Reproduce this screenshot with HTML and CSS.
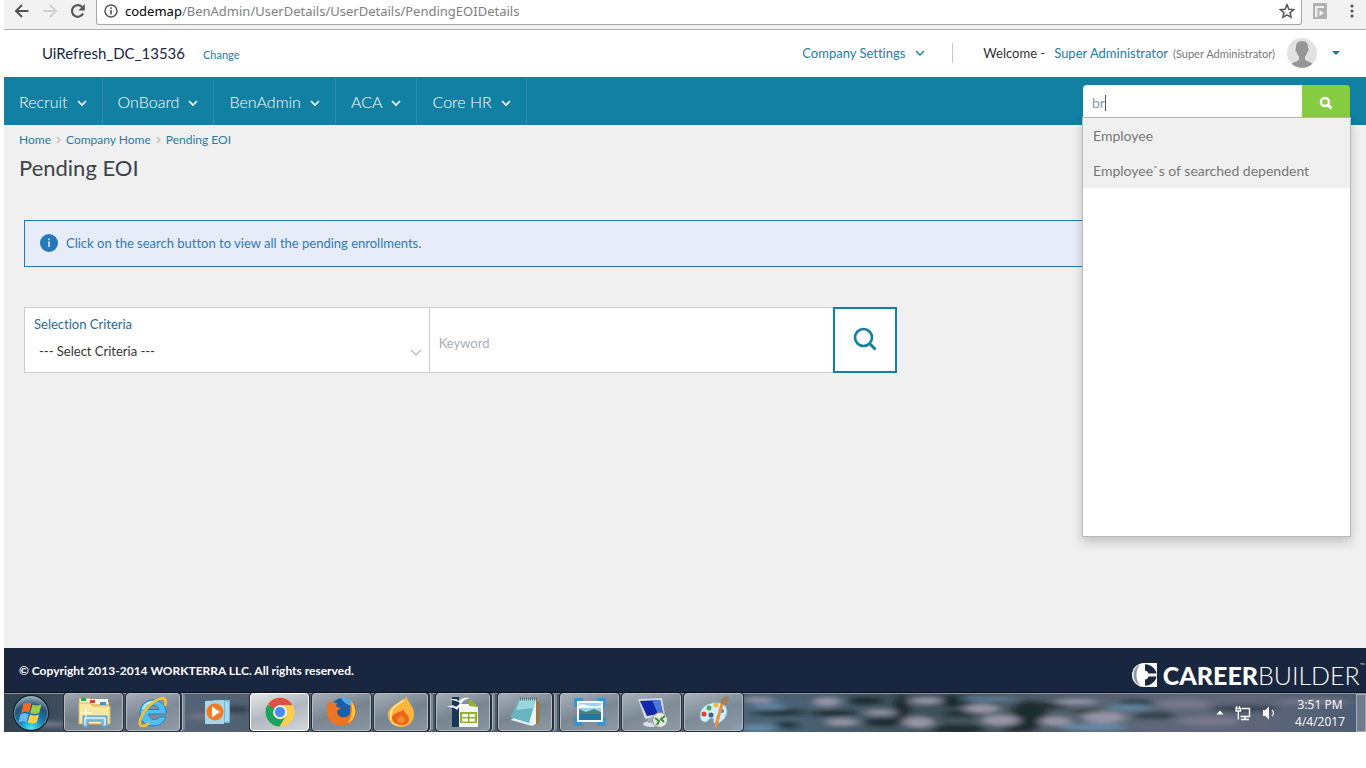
FILE: index.html
```
<!DOCTYPE html>
<html lang="en">
<head>
    <meta charset="UTF-8">
    <meta name="viewport" content="width=device-width, initial-scale=1.0">
    <title>Pending EOI</title>
    <link rel="stylesheet" href="styles.css">
</head>
<body>
    <!-- Browser toolbar -->
    <div class="browser-bar">
        <button type="button" class="browser-btn" aria-label="Back">
            <svg width="16" height="16" viewBox="0 0 16 16" fill="none" stroke="#555" stroke-width="2"><path d="M14.500 8H3M8 2L2 8l6 6"/></svg>
        </button>
        <button type="button" class="browser-btn" aria-label="Forward">
            <svg width="16" height="16" viewBox="0 0 16 16" fill="none" stroke="#d0d0d0" stroke-width="2"><path d="M1.500 8H13M8 2l6 6-6 6"/></svg>
        </button>
        <button type="button" class="browser-btn" aria-label="Reload">
            <svg width="16" height="16" viewBox="0 0 16 16"><path d="M13 10.500A5.800 5.800 0 1 1 12 4" fill="none" stroke="#555" stroke-width="2.200"/><path d="M14.800 1v6.500H8.300z" fill="#555"/></svg>
        </button>
        <div class="address">
            <svg width="14" height="14" viewBox="0 0 14 14"><circle cx="7" cy="7" r="6" fill="none" stroke="#555" stroke-width="1.500"/><path d="M7 6v4.500M7 3.300v1.600" stroke="#555" stroke-width="1.600"/></svg>
            <span class="url"><b>codemap</b>/BenAdmin/UserDetails/UserDetails/PendingEOIDetails</span>
            <svg class="star" width="16" height="16" viewBox="0 0 16 16"><path d="M8 1.800l1.900 4.400 4.700.4-3.600 3.100 1.100 4.600L8 11.900l-4.100 2.400L5 9.700 1.400 6.600l4.700-.4z" fill="none" stroke="#555" stroke-width="1.500"/></svg>
        </div>
        <svg class="extension" width="16" height="16" viewBox="0 0 16 16"><rect x="1" width="14" height="16" rx="1" fill="#b0b0b0"/><path d="M3 14V3h9v2H5.500v9z" fill="#eee"/><path d="M7.500 7v6l4-3z" fill="#fff"/></svg>
        <svg class="menu-dots" width="4" height="16" viewBox="0 0 4 16" fill="#555"><circle cx="2" cy="3" r="1.600"/><circle cx="2" cy="8" r="1.600"/><circle cx="2" cy="13" r="1.600"/></svg>
    </div>

    <!-- Header -->
    <header class="header">
        <span class="company">UiRefresh_DC_13536</span>
        <a href="#" class="change">Change</a>
        <a href="#" class="settings">Company Settings
            <svg width="10" height="6" viewBox="0 0 10 6"><path d="M1 1l4 4 4-4" fill="none" stroke="#1280a2" stroke-width="1.300"/></svg>
        </a>
        <div class="user">
            <span class="welcome">Welcome -</span>
            <a href="#">Super Administrator</a>
            <span class="role">(Super Administrator)</span>
            <svg class="avatar" width="30" height="30" viewBox="0 0 30 30"><defs><clipPath id="round"><circle cx="15" cy="15" r="15"/></clipPath></defs><g clip-path="url(#round)"><path fill="#e2e2e2" d="M0 0h30v30H0z"/><path fill="#969696" d="M15 3c4.500 0 6.300 2.800 6 7 1 .4.500 3.600-.7 4.200-.4 2-1.200 3-2.300 4v3.300c1.500 2.500 8 2.300 8.700 6V30H4v-3c1-3.200 6.600-3.200 8-5.500v-3.300c-1.200-1-2-2.200-2.300-4C8.300 13.400 8 10.400 9 10c-.4-4.200 1.500-7 6-7z"/></g></svg>
            <svg width="8" height="4" viewBox="0 0 8 4"><path d="M0 0h8L4 4z" fill="#1280a2"/></svg>
        </div>
    </header>

    <!-- Navigation -->
    <nav class="nav">
        <ul class="nav-list">
            <li><a href="#">Recruit <svg width="10" height="7" viewBox="0 0 10 7"><path d="M1 1l4 4 4-4"/></svg></a></li>
            <li><a href="#">OnBoard <svg width="10" height="7" viewBox="0 0 10 7"><path d="M1 1l4 4 4-4"/></svg></a></li>
            <li><a href="#">BenAdmin <svg width="10" height="7" viewBox="0 0 10 7"><path d="M1 1l4 4 4-4"/></svg></a></li>
            <li><a href="#">ACA <svg width="10" height="7" viewBox="0 0 10 7"><path d="M1 1l4 4 4-4"/></svg></a></li>
            <li><a href="#">Core HR <svg width="10" height="7" viewBox="0 0 10 7"><path d="M1 1l4 4 4-4"/></svg></a></li>
        </ul>
        <form class="search">
            <input type="text" class="search-input" value="br" aria-label="Search">
            <span class="caret"></span>
            <button type="button" class="search-btn" aria-label="Search">
                <svg width="14" height="14" viewBox="0 0 14 14" fill="none" stroke="#fff"><circle cx="6" cy="6" r="4" stroke-width="2.400"/><path d="M9 9l3.500 3.500" stroke-width="2.800"/></svg>
            </button>
            <div class="suggestions">
                <a href="#">Employee</a>
                <a href="#">Employee`s of searched dependent</a>
            </div>
        </form>
    </nav>

    <main class="main">
        <div class="breadcrumb">
            <a href="#">Home</a>
            <svg width="5" height="8" viewBox="0 0 5 8"><path d="M1 1l3 3-3 3"/></svg>
            <a href="#">Company Home</a>
            <svg width="5" height="8" viewBox="0 0 5 8"><path d="M1 1l3 3-3 3"/></svg>
            <a href="#">Pending EOI</a>
        </div>
        <h1>Pending EOI</h1>

        <div class="info">
            <svg width="18" height="18" viewBox="0 0 18 18"><circle cx="9" cy="9" r="9" fill="#2579ba"/><path d="M9 7.500V13M9 4.500v1.700" stroke="#dfeaf7" stroke-width="1.600"/></svg>
            <span>Click on the search button to view all the pending enrollments.</span>
        </div>

        <form class="filter">
            <div class="criteria">
                <label for="criteria">Selection Criteria</label>
                <div class="select-row">
                    <select id="criteria">
                        <option>--- Select Criteria ---</option>
                    </select>
                    <svg width="12" height="8" viewBox="0 0 12 8"><path d="M1 1l5 5 5-5" fill="none" stroke="#bbb" stroke-width="1.400"/></svg>
                </div>
            </div>
            <input type="text" class="keyword" placeholder="Keyword" aria-label="Keyword">
            <button type="button" class="find" aria-label="Find">
                <svg width="24" height="24" viewBox="0 0 24 24" fill="none" stroke="#1280a2"><circle cx="10.500" cy="10.500" r="8.500" stroke-width="2.600"/><path d="M16.500 16.500l6 6" stroke-width="3"/></svg>
            </button>
        </form>
    </main>

    <footer class="footer">
        <span class="copyright">© Copyright 2013-2014 WORKTERRA LLC. All rights reserved.</span>
        <div class="brand">
            <svg width="26" height="24" viewBox="0 0 26 24"><path d="M12 0H25v24H12A12 12 0 0 1 12 0z" fill="#fff"/><path d="M13 1.200C19 1.200 24 6 24.500 10.500H16.500Q16 8 13 7.500zM13 22.800C19 22.800 24 18 24.500 13.500H16.500Q16 16 13 16.500z" fill="#19263f"/><path d="M8 1.500C3 4 1.500 8 1.500 12S3 20 8 22.500C5.500 19 4.500 16 4.500 12S5.500 5 8 1.500z" fill="#8d98ab"/></svg>
            <span class="brand-name"><b>CAREER</b>BUILDER<sup>™</sup></span>
        </div>
    </footer>

    <!-- Windows taskbar -->
    <div class="taskbar">
        <svg class="wallpaper" viewBox="0 0 1362 39" preserveAspectRatio="none" aria-hidden="true">
            <defs>
                <linearGradient id="water" x2="1"><stop offset="0" stop-color="#30414f"/><stop offset=".12" stop-color="#566477"/><stop offset=".3" stop-color="#485b6a"/><stop offset=".5" stop-color="#536474"/><stop offset=".56" stop-color="#4b6577"/><stop offset=".68" stop-color="#3f5058"/><stop offset=".84" stop-color="#5c6878"/><stop offset=".92" stop-color="#5f6679"/><stop offset="1" stop-color="#4a5c72"/></linearGradient>
                <filter id="soft" x="-5%" y="-50%" width="110%" height="200%"><feGaussianBlur stdDeviation="5 2"/></filter>
            </defs>
            <path fill="url(#water)" d="M0 0h1362v39H0z"/>
            <g filter="url(#soft)">
                <g fill="#15201e" opacity=".8">
                    <ellipse cx="775" cy="19" rx="28" ry="3"/><ellipse cx="782" cy="32" rx="12" ry="3"/><ellipse cx="830" cy="20" rx="24" ry="3"/><ellipse cx="862" cy="7" rx="18" ry="4"/><ellipse cx="898" cy="14" rx="8" ry="14"/><ellipse cx="880" cy="29" rx="20" ry="4"/><ellipse cx="951" cy="7" rx="20" ry="6"/><ellipse cx="955" cy="36" rx="28" ry="4"/><ellipse cx="958" cy="20" rx="18" ry="3"/><ellipse cx="1025" cy="21" rx="18" ry="14"/><ellipse cx="1042" cy="12" rx="24" ry="3"/><ellipse cx="1015" cy="35" rx="18" ry="4"/><ellipse cx="1085" cy="18" rx="16" ry="2"/>
                </g>
                <g fill="#24343c" opacity=".7">
                    <ellipse cx="1150" cy="22" rx="22" ry="4"/><ellipse cx="1132" cy="9" rx="18" ry="4"/><ellipse cx="1240" cy="15" rx="35" ry="3"/><ellipse cx="232" cy="16" rx="14" ry="4"/>
                </g>
                <g fill="#9694a6">
                    <ellipse cx="755" cy="6" rx="16" ry="3"/><ellipse cx="823" cy="8" rx="14" ry="5"/><ellipse cx="838" cy="29" rx="17" ry="4"/><ellipse cx="876" cy="19" rx="16" ry="3"/><ellipse cx="915" cy="29" rx="16" ry="6"/><ellipse cx="922" cy="7" rx="16" ry="4"/><ellipse cx="978" cy="15" rx="18" ry="5"/><ellipse cx="996" cy="27" rx="19" ry="6"/><ellipse cx="1052" cy="28" rx="16" ry="5"/><ellipse cx="1072" cy="8" rx="22" ry="3"/><ellipse cx="1100" cy="24" rx="22" ry="6"/>
                </g>
                <g fill="#77788b">
                    <ellipse cx="1180" cy="10" rx="28" ry="5"/><ellipse cx="1205" cy="28" rx="32" ry="5"/><ellipse cx="1310" cy="8" rx="36" ry="3"/><ellipse cx="205" cy="23" rx="22" ry="3"/><ellipse cx="45" cy="31" rx="20" ry="3"/>
                </g>
                <g fill="#6488a6">
                    <ellipse cx="754" cy="35" rx="20" ry="4"/><ellipse cx="765" cy="13" rx="16" ry="3"/><ellipse cx="1090" cy="34" rx="34" ry="4"/><ellipse cx="985" cy="5" rx="30" ry="2"/><ellipse cx="1125" cy="14" rx="22" ry="3"/>
                </g>
            </g>
        </svg>
        <button type="button" class="start" aria-label="Start">
            <svg width="38" height="38" viewBox="0 0 38 38"><defs><radialGradient id="orb" cy=".95" r=".95"><stop offset="0" stop-color="#42eafc"/><stop offset=".4" stop-color="#137bb3"/><stop offset=".7" stop-color="#29506e"/><stop offset="1" stop-color="#a7bdca"/></radialGradient></defs><circle cx="19" cy="19" r="17.500" fill="url(#orb)" stroke="#152735" stroke-width="1.500"/><circle cx="19" cy="19" r="16.500" fill="none" stroke="#9ab3c2" opacity=".6"/><path d="M11.500 10c3-2 5.500-1.500 8-.5l-2.300 9c-2.500-1-5-1.200-8 .5z" fill="#f06a2a"/><path d="M20.500 10.500c3 1.300 5.500 1.300 9 0l-2.300 8.500c-3.500 1.500-6 1.300-9 0z" fill="#9bcf45"/><path d="M8.500 20.500c3-1.700 5.500-1.700 8-.5l-2 8c-2.500-1-5-1-8 .5z" fill="#6cb8f0"/><path d="M18 20.500c3 1.200 5.500 1.300 9 0l-2.200 8c-3 1.500-6 1.300-9 0z" fill="#fdd03f"/></svg>
        </button>
        <div class="apps">
            <button type="button" class="app" aria-label="Explorer">
                <svg width="34" height="32" viewBox="0 0 34 32"><path d="M2 4V2h10l2 2h4l1 2h13v22H2z" fill="#e4c76f"/><path d="M3 3h28v5H3z" fill="#faf6e6"/><path d="M4 2h5v3H4z" fill="#2aa84a"/><path d="M13 4h5v3h-5z" fill="#e23b2e"/><path d="M23 6h6v3h-6z" fill="#3b96d6"/><path d="M2 7h11l3 3h17v18H2z" fill="#f8e7a2" stroke="#d9b95c"/><path d="M6 31V20h24v11h-5v-6H11v6z" fill="#84bfe3" stroke="#5999c2"/><path d="M8 22h20M8 22v7M28 22v7" stroke="#d7f2ff" stroke-width="1.500"/><path d="M9 11v12M3 17h12" stroke="#fff"/></svg>
            </button>
            <button type="button" class="app stacked" aria-label="Internet Explorer">
                <svg width="32" height="32" viewBox="0 0 32 32"><path d="M29 18H11.500c.5 6 8 7 11 3H29c-2 6-7 9-13 9C8 30 3 25 3 17S9 4 16 4s14 5 13 14zM11.500 13.500h10.500c-1-5.500-9.500-5.500-10.500 0z" fill="#52bdf0" stroke="#2581bd" fill-rule="evenodd"/><path d="M6 13q3-7 10-7" stroke="#c9f2ff" stroke-width="2" fill="none"/><path d="M28 10c4-13-9-7-16 0C4 18-1 31 6 30c2 0 5-2 6-3" fill="none" stroke="#f5c431" stroke-width="2.600"/></svg>
            </button>
            <button type="button" class="app plain" aria-label="Media Player">
                <svg width="28" height="28" viewBox="0 0 28 28"><path d="M9 2h17v23H9z" fill="#6eb8de"/><path d="M22 3v21M24 4v19" stroke="#e4f7ff"/><path d="M1 3l19-1v24H1z" fill="#a7d5ea"/><circle cx="11" cy="14" r="8.500" fill="#f47920"/><path d="M8 8.500v11l8-5.500z" fill="#fff"/></svg>
            </button>
            <button type="button" class="app active" aria-label="Chrome">
                <svg width="30" height="30" viewBox="0 0 30 30"><circle cx="15" cy="15" r="14.500" fill="#fccd48"/><path d="M2.400 7.800A14.500 14.500 0 0 0 14.500 29.500L21.200 18.600A7.200 7.200 0 0 1 8.800 18.600z" fill="#1aa260"/><path d="M2.400 7.800L8.800 18.600 11 11z" fill="#1aa260"/><path d="M3 7A14.500 14.500 0 0 1 27.600 8H15L8.800 12z" fill="#dd5144"/><circle cx="15" cy="15" r="6.800" fill="#fff"/><circle cx="15" cy="15" r="5.200" fill="#4b8bf4"/></svg>
            </button>
            <button type="button" class="app" aria-label="Firefox">
                <svg width="32" height="32" viewBox="0 0 32 32"><circle cx="17" cy="15" r="13" fill="#1b5ea8"/><path d="M15 2c8-1 14 4 14 13-3-8-9-4-14-13z" fill="#53aee8"/><path d="M2 5l3 2c2-1 4 0 6 0-1 2-1 3 0 4l4 1-4 3c0 5 4 7 8 6 4 0 6-4 5-8l1-8c6 4 6 13 3 18-6 10-24 9-27-4C1 14 1 9 2 5z" fill="#ed7325"/><path d="M25 5c7 8 5 18-3 22 3-5 5-10 3-22z" fill="#fbc83d"/></svg>
            </button>
            <button type="button" class="app stacked" aria-label="Burner">
                <svg width="28" height="32" viewBox="0 0 28 32"><path d="M20 0c-1 5 7 9 7 18C27 26 21 31 14 31S1 26 1 19C1 9 14 8 20 0z" fill="#fbb53c"/><path d="M17 4C9 9 3 13 4 20c0 6 4 9 8 9" fill="none" stroke="#ffe08c" stroke-width="2"/><path d="M17 13c-1 3 5 6 5 10 0 4-3 6-8 6s-9-3-9-7c0-6 9-5 12-9z" fill="#ea6518"/><path d="M15 19c0 2 3 3 3 5s-1 3-4 3-4-1-4-3c0-3 4-3 5-5z" fill="#f58c2c"/></svg>
            </button>
            <button type="button" class="app stacked" aria-label="Calc">
                <svg width="34" height="32" viewBox="0 0 34 32"><path d="M6 1h7v30H6z" fill="#183956"/><path d="M13 8h12l7 3v20H13z" fill="#f4f4f4"/><path d="M23 2l9 9-9-1z" fill="#8fb51f"/><path d="M14 16h17v11H14z" fill="#8fb51f"/><path d="M16 18h6v3h-6zM23.500 18H29v3h-5.500zM16 22.500h6v3h-6zM23.500 22.500H29v3h-5.500z" fill="#fff"/><path d="M4 4c4-2 7-1 9 1 2-3 6-4 11-3-5 1-7 3-9 6-3-3-6-4-11-4zM1 11c4-2 7-2 9 0 2-3 6-3 10-2-5 0-7 2-9 5-3-3-6-3-10-3z" fill="#fff"/></svg>
            </button>
            <button type="button" class="app stacked" aria-label="Notepad">
                <svg width="34" height="32" viewBox="0 0 34 32"><path d="M27 4l5 2-1 21-5 2z" fill="#9d7844"/><path d="M28 4v24l-4 2-21-6z" fill="#e6f1f2"/><path d="M12 3h16l-7 24-19-6z" fill="#68b5c2"/><path d="M12 3h16l-3 9-17 2z" fill="#9bd6dd"/><path d="M12 3h17" stroke="#67757c" stroke-width="3" stroke-dasharray="1 1"/></svg>
            </button>
            <button type="button" class="app" aria-label="Pictures">
                <svg width="32" height="28" viewBox="0 0 32 28"><path d="M2 9V2h7M23 2h7v7M2 19v7h7M23 26h7v-7" fill="none" stroke="#3e93cc" stroke-width="4"/><path d="M3 3h26v21H3z" fill="#f3f8fb"/><path d="M5 5h22v17H5z" fill="#9bd1ee"/><path d="M5 7c6-3 11 4 22 0v3H5z" fill="#eefaff"/><path d="M5 11l7 3 8-3 7 3v3H5z" fill="#4b866c"/><path d="M5 16h22v6H5z" fill="#2675a3"/></svg>
            </button>
            <button type="button" class="app" aria-label="Remote Desktop">
                <svg width="32" height="32" viewBox="0 0 32 32"><ellipse cx="15" cy="28" rx="8" ry="3" fill="#dde1e5"/><path d="M12 21h6v6h-6z" fill="#a3adb8"/><path d="M2 3l24-1 3 17-20 4z" fill="#d1d7df"/><path d="M4 5l20-1 3 13-16 3z" fill="#1428ad"/><path d="M16 4h8l3 13-5 1z" fill="#4c78d7"/><circle cx="24" cy="24" r="7.500" fill="#e7e7e4" stroke="#8d8d8d"/><path d="M19 22l4 3-2 4M29 20l-4 3 3 3" fill="none" stroke="#3a8c35" stroke-width="2"/></svg>
            </button>
            <button type="button" class="app" aria-label="Paint">
                <svg width="34" height="32" viewBox="0 0 34 32"><path d="M5 13c6-9 25-9 25 2 0 9-9 14-13 12-2-1 1-4-2-5-3 0-4 5-8 4-5-1-5-9-2-13z" fill="#d4edf9" stroke="#75b5d8"/><circle cx="7" cy="18" r="2.500" fill="#e0442f"/><circle cx="12" cy="12" r="2.500" fill="#4bac50"/><circle cx="19" cy="9" r="2.500" fill="#f3b937"/><circle cx="14" cy="19" r="2.500" fill="#41667d"/><circle cx="25" cy="15" r="2" fill="#3990d3"/><path d="M27 7l-7 24-3 1 1-5 6-21z" fill="#ef9139"/><path d="M24 7c0-5 3-7 8-6-1 5-2 7-5 8z" fill="#a77c53"/></svg>
            </button>
        </div>
        <div class="tray">
            <svg width="8" height="5" viewBox="0 0 8 5"><path d="M4 .5L7.500 4.500h-7z" fill="#fff"/></svg>
            <svg width="16" height="16" viewBox="0 0 16 16" fill="none" stroke="#fff"><path d="M6.500 3.500h8v8H5.500" stroke-width="1.400"/><path d="M6 14.500h8M10 12v2" stroke-width="1.600"/><path d="M1.500 1v2M4.500 1v2M1 3.500h4.500v2.500H1zM3.300 6v8.500" stroke-width="1.300"/></svg>
            <svg width="14" height="16" viewBox="0 0 14 16"><path d="M1 5h2.500L7 1.500v13L3.500 11H1z" fill="#fff"/><path d="M10 5q3 3 0 6" fill="none" stroke="#e1e7ee" stroke-width="1.300"/></svg>
            <div class="clock">
                <span>3:51 PM</span>
                <span>4/4/2017</span>
            </div>
            <button type="button" class="show-desktop" aria-label="Show desktop"></button>
        </div>
    </div>
</body>
</html>
```
FILE: styles.css
```
* {
    box-sizing: border-box;
}
body {
    display: flex;
    flex-direction: column;
    min-height: calc(100vh - 36px);
    margin: 0 0 36px 4px;
    background-color: #fff;
    font-family: Lato, "Liberation Sans", sans-serif;
    font-size: 13px;
    font-variant-ligatures: none;
    color: #333;
}
a {
    color: #1f7ca3;
    text-decoration: none;
}
button {
    padding: 0;
    border: 0;
    background: none;
}
svg {
    display: block;
    flex-shrink: 0;
}

/* Browser toolbar */
.browser-bar {
    display: flex;
    height: 30px;
    padding-left: 10px;
    background-color: #f2f2f2;
    border-bottom: 1px solid #b0b0b0;
}
.browser-btn {
    height: 22px;
    margin-right: 12px;
}
.address {
    display: flex;
    flex: 1;
    align-items: center;
    height: 25px;
    margin-left: -2px;
    padding: 0 6px 2px 7px;
    background-color: #fff;
    border: 1px solid #a8a8a8;
    border-top: 0;
    border-radius: 0 0 3px 3px;
}
.url {
    margin-left: 7px;
    font-family: "Noto Sans", sans-serif;
    font-size: 13px;
    color: #808080;
}
.url b {
    font-weight: normal;
    color: #000;
}
.star {
    margin-left: auto;
}
.extension {
    margin: 3px 22px 0 10px;
}
.menu-dots {
    margin: 3px 12px 0 0;
}

/* Header */
.header {
    display: flex;
    align-items: center;
    height: 47px;
    padding: 0 26px 1px 38px;
}
.company {
    font-size: 15px;
    color: #19263f;
}
.change {
    margin: 3px 0 0 18px;
    font-size: 11px;
}
.settings {
    display: flex;
    align-items: center;
    gap: 10px;
    height: 20px;
    margin-left: auto;
    padding-right: 27px;
    border-right: 1px solid #c8c8c8;
}
.user {
    display: flex;
    align-items: center;
    padding-left: 30px;
}
.welcome {
    margin-right: 9px;
}
.role {
    margin-left: 5px;
    font-size: 11px;
    color: #777;
}
.avatar {
    margin: 0 15px 0 12px;
}

/* Navigation */
.nav {
    display: flex;
    justify-content: space-between;
    height: 48px;
    padding-right: 16px;
    background-color: #1280a2;
}
.nav-list {
    display: flex;
    margin: 0;
    padding: 2px 0 0;
    list-style: none;
}
.nav-list li {
    border-right: 1px solid #2b8dab;
}
.nav-list a {
    display: flex;
    align-items: center;
    gap: 9px;
    height: 46px;
    padding: 0 15px 2px 15px;
    font-size: 16px;
    font-weight: 300;
    color: #fff;
}
.nav-list svg {
    margin-top: 4px;
}
.nav-list path {
    fill: none;
    stroke: #fff;
    stroke-width: 1.7;
}
.search {
    position: relative;
    display: flex;
    width: 267px;
    height: 33px;
    margin-top: 8px;
}
.search-input {
    flex: 1;
    min-width: 0;
    padding: 2px 9px 0;
    border: 0;
    border-radius: 4px 0 0 0;
    background-color: #fff;
    font-family: inherit;
    font-size: 14px;
    color: #8d99a2;
}
.caret {
    position: absolute;
    top: 10px;
    left: 22px;
    width: 1px;
    height: 16px;
    background-color: #555;
}
.search-btn {
    display: flex;
    align-items: center;
    justify-content: center;
    width: 48px;
    padding-top: 2px;
    border-radius: 0 4px 0 0;
    background-color: #87cd42;
}
.suggestions {
    position: absolute;
    top: 32px;
    left: -1px;
    right: -1px;
    height: 420px;
    background-color: #fff;
    border: 1px solid #b8b8b8;
    box-shadow: 0 5px 10px rgba(0, 0, 0, 0.2);
}
.suggestions a {
    display: block;
    padding: 0 10px;
    background-color: #f0f0f0;
    font-size: 14px;
    line-height: 35px;
    color: #777;
}

/* Content */
.main {
    flex: 1;
    padding: 7px 20px 40px;
    background-color: #f0f0f0;
}
.breadcrumb {
    display: flex;
    align-items: center;
    gap: 5px;
    margin-left: -5px;
    font-size: 12px;
    line-height: 15px;
}
.breadcrumb path {
    fill: none;
    stroke: #c0c0c0;
    stroke-width: 1.3;
}
h1 {
    margin: 7px 0 38px -5px;
    font-size: 22px;
    font-weight: normal;
    line-height: 28px;
    color: #3c4248;
}
.info {
    display: flex;
    align-items: center;
    gap: 8px;
    height: 47px;
    padding: 0 15px 2px;
    background-color: #e6ecf8;
    border: 1px solid #2579ba;
    color: #2f7ab5;
}
.filter {
    display: flex;
    width: 66%;
    height: 66px;
    margin-top: 40px;
}
.criteria {
    width: 46.5%;
    padding: 7px 7px 0 9px;
    background-color: #fff;
    border: 1px solid #ccc;
}
.criteria label {
    display: block;
    line-height: 18px;
    color: #1f6c96;
}
.select-row {
    display: flex;
    align-items: center;
    height: 36px;
}
.select-row select {
    flex: 1;
    height: 36px;
    padding: 0 0 0 5px;
    border: 0;
    background: none;
    appearance: none;
    font-family: inherit;
    font-size: 13px;
    color: #333;
}
.select-row svg {
    margin-top: 3px;
}
.keyword {
    flex: 1;
    min-width: 0;
    padding: 6px 9px 0;
    border: solid #ccc;
    border-width: 1px 0;
    background-color: #fff;
    font-family: inherit;
    font-size: 13px;
}
.keyword::placeholder {
    color: #a5aeb5;
}
.find {
    display: flex;
    align-items: center;
    justify-content: center;
    width: 64px;
    padding-bottom: 2px;
    background-color: #fff;
    border: 2px solid #0f7fb0;
}

/* Footer */
.footer {
    display: flex;
    align-items: center;
    justify-content: space-between;
    height: 44px;
    padding: 0 1px 0 15px;
    background-color: #19263f;
    color: #fff;
}
.copyright {
    font-size: 12px;
    font-weight: bold;
}
.brand {
    display: flex;
    align-items: center;
    gap: 5px;
    padding-top: 9px;
}
.brand-name {
    font-size: 25px;
    font-weight: 300;
    line-height: 26px;
}
.brand-name b {
    font-weight: 900;
}
.brand-name sup {
    font-size: 7px;
    line-height: 7px;
    vertical-align: top;
}

/* Taskbar */
.taskbar {
    position: relative;
    display: flex;
    height: 40px;
    border-top: 1px solid #0d1420;
    overflow: hidden;
}
.wallpaper {
    position: absolute;
    top: 0;
    left: 0;
    width: 100%;
    height: 100%;
    border-top: 1px solid #8b90a0;
}
.start {
    position: relative;
    width: 60px;
    padding-left: 8px;
}
.apps {
    position: relative;
    display: flex;
    gap: 3px;
}
.app {
    display: flex;
    align-items: center;
    justify-content: center;
    width: 59px;
    height: 38px;
    border: 1px solid #b4bbc5;
    border-radius: 3px;
    outline: 1px solid #232d38;
    background: linear-gradient(160deg, rgba(255, 255, 255, 0.5), rgba(255, 255, 255, 0.25) 50%, rgba(255, 255, 255, 0.35));
}
.app.stacked {
    width: 54px;
    margin-right: 5px;
    box-shadow: 2px 0 #29333e, 3px 0 #aab2bd, 5px 0 #7c8794;
}
.app.plain {
    border-color: transparent;
    outline: 0;
    background: none;
}
.app.active {
    border-color: #fff;
    background: linear-gradient(160deg, rgba(255, 255, 255, 0.85), rgba(255, 255, 255, 0.55) 50%, rgba(255, 255, 255, 0.75));
}
.tray {
    position: relative;
    display: flex;
    align-items: center;
    gap: 11px;
    margin-left: auto;
}
.clock {
    display: flex;
    flex-direction: column;
    align-items: center;
    margin-left: 8px;
    font-family: "Open Sans", sans-serif;
    font-size: 12px;
    line-height: 17px;
    color: #fff;
}
.show-desktop {
    width: 10px;
    height: 38px;
    border: 1px solid #a5adb8;
    background-color: rgba(255, 255, 255, 0.2);
}
```
